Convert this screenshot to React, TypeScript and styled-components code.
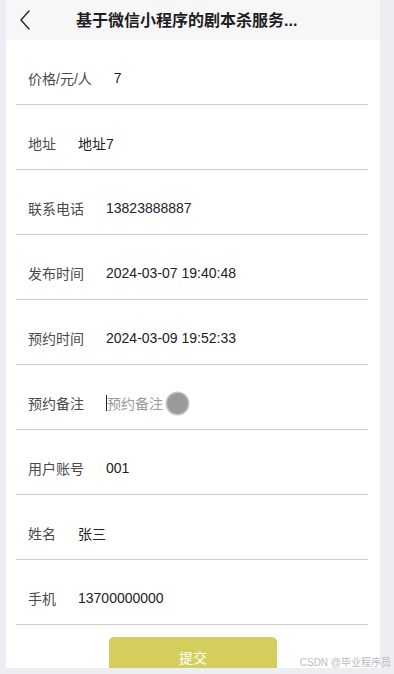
import React from "react";
import styled, { createGlobalStyle } from "styled-components";

const Global = createGlobalStyle`
  html, body { margin: 0; padding: 0; background: #eceef3; }
  body { font-family: "Liberation Sans", "Noto Sans CJK SC", sans-serif; }
  * { box-sizing: border-box; }
`;

const Page = styled.div`
  position: relative;
  width: 394px;
  height: 674px;
  overflow: hidden;
`;

const Card = styled.div`
  margin-left: 6px;
  width: 374px;
  height: 668px;
  background: #fff;
  overflow: hidden;
  display: flex;
  flex-direction: column;
`;

const Header = styled.div`
  height: 40px;
  flex-shrink: 0;
  background: #f7f7f8;
  display: flex;
  align-items: center;
  position: relative;
`;

const Back = styled.div`
  width: 40px;
  height: 40px;
  display: flex;
  align-items: center;
  justify-content: center;
`;

const Title = styled.div`
  position: absolute;
  left: 70px;
  top: 0;
  height: 40px;
  line-height: 42px;
  font-size: 16px;
  font-weight: bold;
  color: #1f1f1f;
  white-space: nowrap;
`;

const Form = styled.div`
  padding: 0 12px 0 10px;
  display: flex;
  flex-direction: column;
`;

const Row = styled.div`
  margin-top: 12px;
  height: 53px;
  border-bottom: 1px solid #cfcfcf;
  display: flex;
  align-items: center;
  padding-left: 12px;
  font-size: 14px;
`;

const Label = styled.span`
  color: #4a4a4a;
  margin-right: 22px;
  white-space: nowrap;
`;

const Value = styled.span<{ $placeholder?: boolean }>`
  color: ${(p) => (p.$placeholder ? "#9a9a9a" : "#222")};
  white-space: nowrap;
`;

const Caret = styled.span`
  display: inline-block;
  width: 1px;
  height: 16px;
  background: #222;
`;

const Dot = styled.span`
  display: inline-block;
  width: 21px;
  height: 21px;
  border-radius: 50%;
  background: #9a9a9a;
  box-shadow: 0 0 0 1.5px #c4c4c4;
  margin-left: 4px;
`;

const Foot = styled.div`
  display: flex;
  justify-content: center;
  padding-top: 12px;
`;

const Submit = styled.button`
  width: 168px;
  height: 40px;
  border: none;
  border-radius: 5px;
  background: #d4cf5d;
  color: #fff;
  font-size: 14px;
  font-family: "Liberation Sans", "Noto Sans CJK SC", sans-serif;
  padding: 0;
`;

const Watermark = styled.div`
  position: absolute;
  right: 3px;
  bottom: 5px;
  font-size: 10px;
  color: #bcbcbc;
  white-space: nowrap;
`;

const rows: { label: string; value: string }[] = [
  { label: "价格/元/人", value: "7" },
  { label: "地址", value: "地址7" },
  { label: "联系电话", value: "13823888887" },
  { label: "发布时间", value: "2024-03-07 19:40:48" },
  { label: "预约时间", value: "2024-03-09 19:52:33" },
  { label: "预约备注", value: "" },
  { label: "用户账号", value: "001" },
  { label: "姓名", value: "张三" },
  { label: "手机", value: "13700000000" },
];

export default function App() {
  return (
    <Page>
      <Global />
      <Card>
        <Header>
          <Back>
            <svg width="16" height="22" viewBox="0 0 16 22">
              <polyline
                points="11,2 3,11 11,20"
                fill="none"
                stroke="#333"
                strokeWidth="1.6"
                strokeLinecap="round"
                strokeLinejoin="round"
              />
            </svg>
          </Back>
          <Title>基于微信小程序的剧本杀服务...</Title>
        </Header>
        <Form>
          {rows.map((r) =>
            r.label === "预约备注" ? (
              <Row key={r.label}>
                <Label>{r.label}</Label>
                <Caret />
                <Value $placeholder>预约备注</Value>
                <Dot />
              </Row>
            ) : (
              <Row key={r.label}>
                <Label>{r.label}</Label>
                <Value>{r.value}</Value>
              </Row>
            )
          )}
        </Form>
        <Foot>
          <Submit>提交</Submit>
        </Foot>
      </Card>
      <Watermark>CSDN @毕业程序员</Watermark>
    </Page>
  );
}
